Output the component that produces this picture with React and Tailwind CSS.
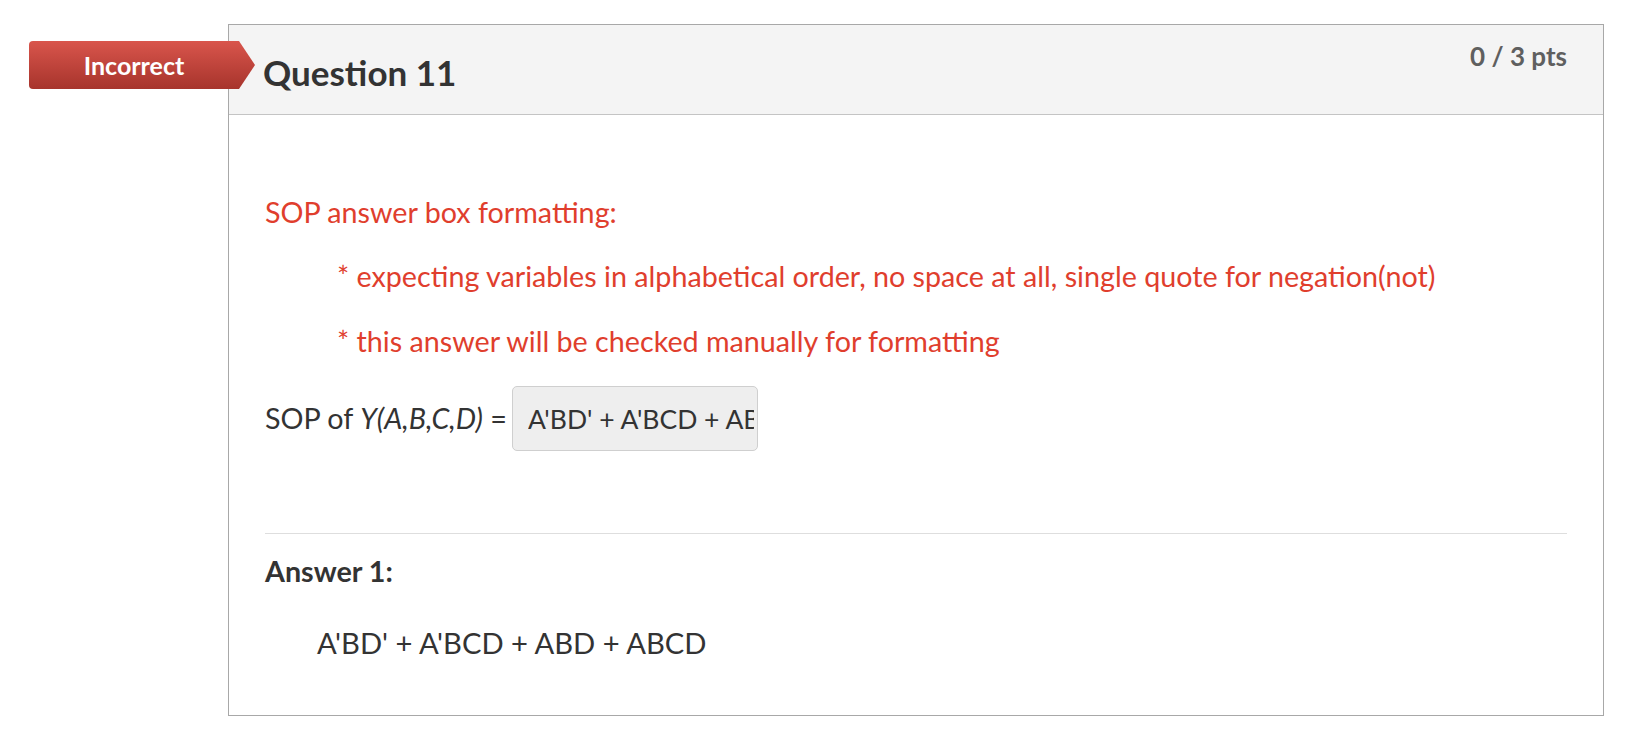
import React from "react";

const lato = { fontFamily: "Lato, 'Open Sans', sans-serif" };

const QuestionCard = () => {
  return (
    <div className="relative w-[1376px] border border-[#a8a8a8] bg-white">
      {/* Incorrect badge hanging off the left side */}
      <div className="absolute left-[-200px] top-[16px] flex h-[48px] w-[226px] items-center justify-center rounded-l-[4px] bg-gradient-to-b from-[#d9554c] to-[#a7342c] pr-[16px] [clip-path:polygon(0_0,calc(100%-16px)_0,100%_50%,calc(100%-16px)_100%,0_100%)]">
        <span className="text-[25px] font-bold leading-none text-white">Incorrect</span>
      </div>

      {/* Header */}
      <div className="flex h-[90px] items-start justify-between border-b border-[#c4c4c4] bg-[#f4f4f4] pl-[34px] pr-[36px]">
        <h2 className="mt-[25px] text-[35px] font-bold leading-[44px] text-[#333]">
          Question 11
        </h2>
        <div className="mt-[15px] text-[26px] font-bold leading-[32px] text-[#5f5f5f]">
          0 / 3 pts
        </div>
      </div>

      {/* Body */}
      <div className="px-[36px] pt-[77px] pb-[52px] text-[28.7px] leading-[40px] text-[#333]">
        <p className="text-[#e03e2d]">SOP answer box formatting:</p>
        <p className="mt-[24px] pl-[72px] text-[#e03e2d]">
          * expecting variables in alphabetical order, no space at all, single quote for negation(not)
        </p>
        <p className="mt-[25px] pl-[72px] text-[#e03e2d]">
          * this answer will be checked manually for formatting
        </p>
        <div className="mt-[25px] flex items-baseline gap-[5px]">
          <span>
            SOP of <em>Y(A,B,C,D)</em> =
          </span>
          <input
            readOnly
            value="A'BD' + A'BCD + ABD + ABCD"
            style={lato}
            className="h-[65px] w-[246px] rounded-[5px] border border-[#cfcfcf] bg-[#eeeeee] pl-[15px] pr-[3px] text-[26.5px] text-[#333] outline-none"
          />
        </div>

        <div className="mt-[82px] border-t border-[#dedede]" />

        <h3 className="mt-[17px] font-bold">Answer 1:</h3>
        <div className="mt-[32px] pl-[52px] text-[29.2px]">A'BD' + A'BCD + ABD + ABCD</div>
      </div>
    </div>
  );
};

export default function App() {
  return (
    <div className="min-h-screen bg-white pl-[228px] pt-[24px]" style={lato}>
      <QuestionCard />
    </div>
  );
}
